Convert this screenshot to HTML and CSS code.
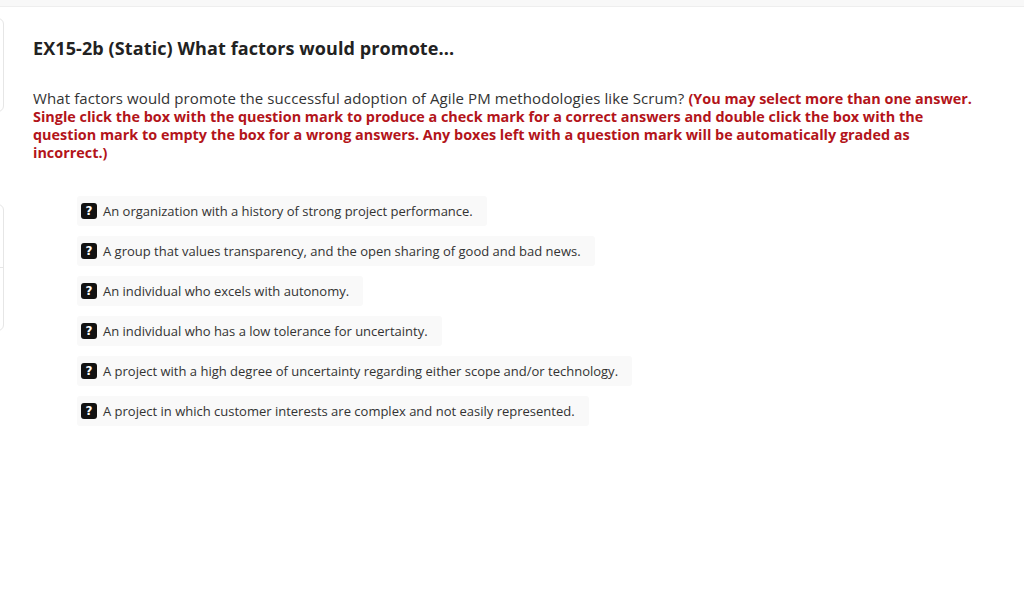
FILE: index.html
```html
<!DOCTYPE html>
<html>
<head>
<meta charset="utf-8">
<link rel="stylesheet" href="styles.css">
</head>
<body>
<div class="topbar"></div>
<div class="layout">
  <aside class="side">
    <div class="side-card side-card-1"></div>
    <div class="side-card side-card-2">
      <div class="side-row"></div>
      <div class="side-row"></div>
    </div>
  </aside>
  <main class="main">
    <h1 class="title">EX15-2b (Static) What factors would promote...</h1>
    <p class="question">What factors would promote the successful adoption of Agile PM methodologies like Scrum? <strong class="instr">(You may select more than one answer. Single click the box with the question mark to produce a check mark for a correct answers and double click the box with the question mark to empty the box for a wrong answers. Any boxes left with a question mark will be automatically graded as incorrect.)</strong></p>
    <ul class="options">
      <li class="option"><span class="qbox">?</span><span class="otext">An organization with a history of strong project performance.</span></li>
      <li class="option"><span class="qbox">?</span><span class="otext">A group that values transparency, and the open sharing of good and bad news.</span></li>
      <li class="option"><span class="qbox">?</span><span class="otext">An individual who excels with autonomy.</span></li>
      <li class="option"><span class="qbox">?</span><span class="otext">An individual who has a low tolerance for uncertainty.</span></li>
      <li class="option"><span class="qbox">?</span><span class="otext">A project with a high degree of uncertainty regarding either scope and/or technology.</span></li>
      <li class="option"><span class="qbox">?</span><span class="otext">A project in which customer interests are complex and not easily represented.</span></li>
    </ul>
  </main>
</div>
</body>
</html>
```
FILE: styles.css
```css
html, body {
  margin: 0;
  padding: 0;
  background: #fff;
}
body {
  font-family: "Open Sans", "Liberation Sans", sans-serif;
  color: #333;
  overflow: hidden;
}
.topbar {
  height: 6px;
  background: #f8f8f8;
  border-bottom: 1px solid #eeeeee;
}
.layout {
  display: flex;
  align-items: flex-start;
}
.side {
  width: 200px;
  margin-left: -196px;
  flex: none;
  padding-top: 11px;
}
.side-card {
  border: 1px solid #e6e6e6;
  border-radius: 6px;
  background: #fff;
}
.side-card-1 {
  height: 92px;
}
.side-card-2 {
  margin-top: 92px;
}
.side-row {
  height: 62px;
}
.side-row + .side-row {
  border-top: 1px solid #e6e6e6;
}
.main {
  flex: 1;
  padding-left: 29px;
  padding-right: 44px;
}
.title {
  margin: 29px 0 0;
  font-size: 18px;
  font-weight: 700;
  line-height: 24px;
  color: #222;
  letter-spacing: 0.1px;
}
.question {
  margin: 29px 0 0;
  font-size: 15px;
  line-height: 18px;
  color: #333;
  letter-spacing: 0.1px;
}
.instr {
  color: #b3141a;
  font-weight: 700;
  font-size: 14.4px;
  line-height: 14px;
  letter-spacing: 0;
}
.options {
  list-style: none;
  margin: 35px 0 0 44px;
  padding: 0;
  display: flex;
  flex-direction: column;
  align-items: flex-start;
  gap: 10px;
}
.option {
  display: flex;
  align-items: center;
  height: 30px;
  padding: 0 14px 0 4px;
  background: #f9f9f9;
  border-radius: 3px;
}
.qbox {
  width: 16px;
  height: 16px;
  border-radius: 3px;
  background: #111;
  color: #fff;
  font-family: "DejaVu Sans", sans-serif;
  font-weight: 700;
  font-size: 12px;
  line-height: 16px;
  text-align: center;
  margin-right: 6px;
  flex: none;
}
.otext {
  font-size: 13px;
  color: #333;
}
```
